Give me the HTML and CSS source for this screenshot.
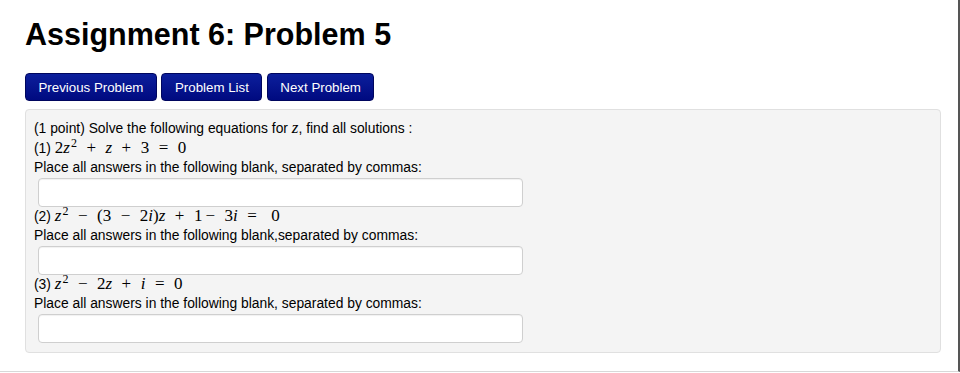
FILE: index.html
```html
<!DOCTYPE html>
<html>
<head>
<meta charset="utf-8">
<link rel="stylesheet" href="styles.css">
</head>
<body>
<div class="page">
  <h1 class="title">Assignment 6: Problem 5</h1>
  <div class="nav">
    <a class="btn">Previous Problem</a>
    <a class="btn">Problem List</a>
    <a class="btn">Next Problem</a>
  </div>
  <div class="problem">
    <div class="line">(1 point) Solve the following equations for <span class="mi">z</span>, find all solutions :</div>
    <div class="line">(1) <span class="math">2<span class="mi">z</span><sup>2</sup><span class="op">+</span><span class="mi">z</span><span class="op">+</span>3<span class="rel">=</span>0</span></div>
    <div class="line">Place all answers in the following blank, separated by commas:</div>
    <input class="answer" type="text">
    <div class="line">(2) <span class="math"><span class="mi">z</span><sup>2</sup><span class="op">−</span>(3<span class="op">−</span>2<span class="mi">i</span>)<span class="mi">z</span><span class="op">+</span>1<span class="op tight">−</span>3<span class="mi">i</span><span class="rel">=</span><span class="last">0</span></span></div>
    <div class="line">Place all answers in the following blank,separated by commas:</div>
    <input class="answer" type="text">
    <div class="line">(3) <span class="math"><span class="mi">z</span><sup>2</sup><span class="op">−</span>2<span class="mi">z</span><span class="op">+</span><span class="mi">i</span><span class="rel">=</span>0</span></div>
    <div class="line">Place all answers in the following blank, separated by commas:</div>
    <input class="answer" type="text">
  </div>
</div>
</body>
</html>
```
FILE: styles.css
```css
html, body {
  margin: 0;
  padding: 0;
  background: #fff;
}
body {
  font-family: "Liberation Sans", Arial, sans-serif;
  color: #000;
}
.page {
  box-sizing: border-box;
  width: 960px;
  height: 372px;
  border-right: 2px solid #555;
  border-bottom: 1px solid #d8d8d8;
  padding: 16px 0 0 25px;
}
.title {
  margin: 0;
  font-size: 30.5px;
  line-height: 36px;
  font-weight: bold;
}
.nav {
  display: flex;
  gap: 4.5px;
  margin-top: 21px;
}
.btn {
  display: flex;
  align-items: center;
  height: 28px;
  box-sizing: border-box;
  padding: 0 12.5px;
  font-size: 13.3px;
  color: #fff;
  background: linear-gradient(to bottom, #0c1f9c, #000a80);
  border: 1px solid #00065e;
  border-radius: 4px;
}
.problem {
  margin-top: 8px;
  width: 916px;
  box-sizing: border-box;
  background: #f4f4f4;
  border: 1px solid #e0e0e0;
  border-radius: 4px;
  padding: 9px 8px 9px 8px;
  font-size: 13.85px;
  line-height: 19.5px;
}
.line {
  white-space: nowrap;
  height: 19.5px;
}
.math {
  font-family: "Liberation Serif", "Times New Roman", serif;
  font-size: 17px;
  line-height: 1;
}
.mi {
  font-family: "Liberation Serif", "Times New Roman", serif;
  font-style: italic;
  font-size: 17px;
  line-height: 1;
}
.math .mi {
  font-size: inherit;
}
.math sup {
  font-size: 12px;
  line-height: 0;
  vertical-align: 6px;
  margin-left: 1px;
}
.op {
  margin: 0 9.5px;
}
.op.tight {
  margin-left: 3px;
}
.rel {
  margin: 0 9.5px;
}
.last {
  margin-left: 5px;
}
.answer {
  display: block;
  margin: 0 0 0 4px;
  width: 485px;
  height: 29px;
  box-sizing: border-box;
  border: 1px solid #cfcfcf;
  border-radius: 4px;
  background: #fff;
  box-shadow: inset 0 1px 1px rgba(0,0,0,0.06);
  padding: 0 6px;
  font-size: 13px;
}
```
